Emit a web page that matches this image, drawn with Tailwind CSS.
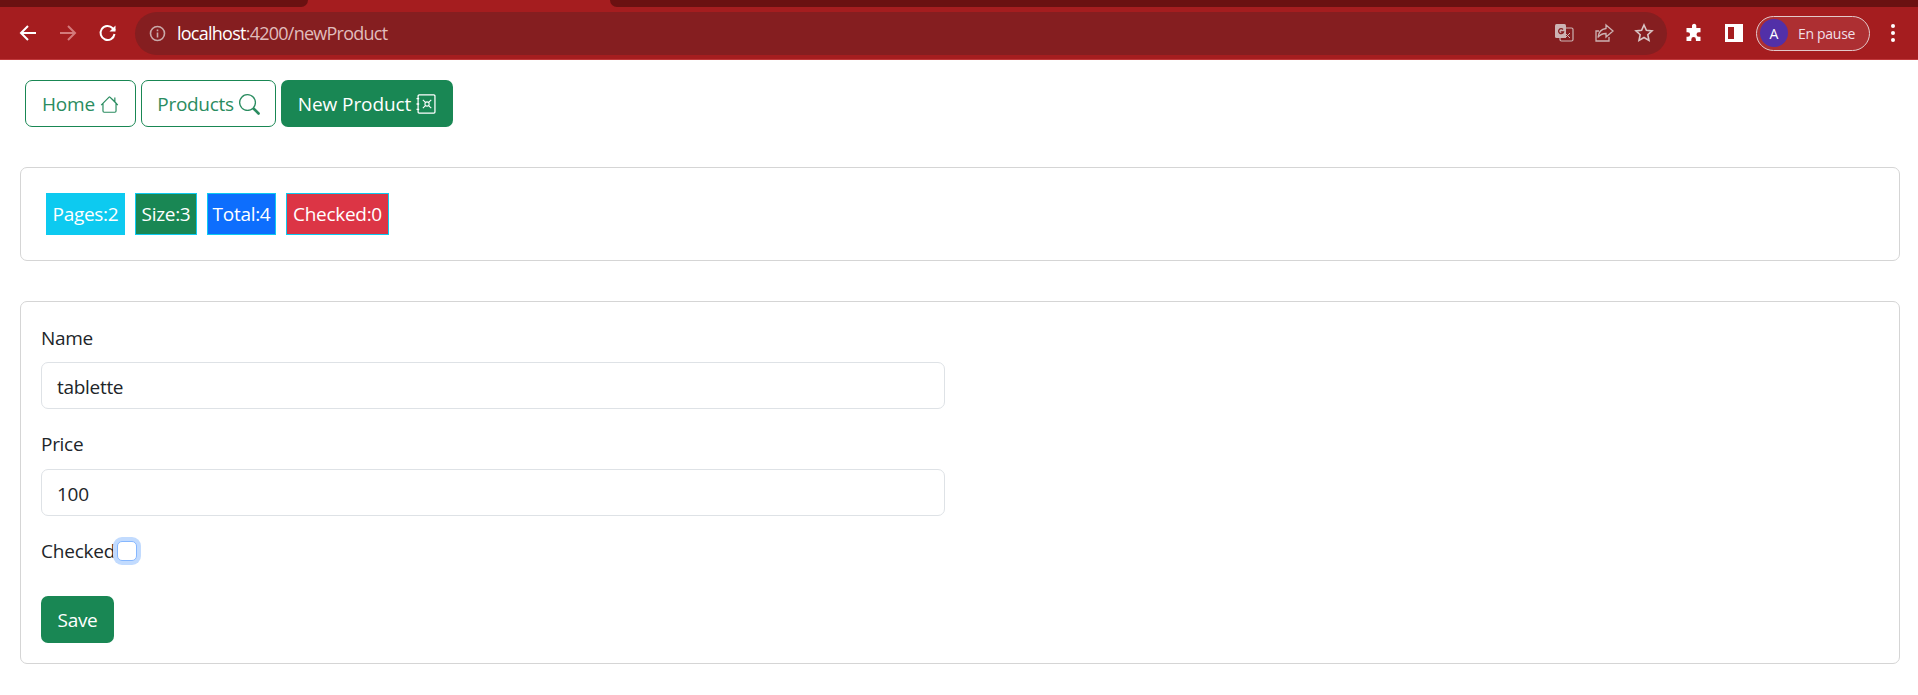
<!DOCTYPE html>
<html lang="en">
<head>
    <meta charset="UTF-8">
    <title>New Product</title>
    <script src="https://cdn.jsdelivr.net/npm/@tailwindcss/browser@4"></script>
</head>
<body class="bg-white h-[695px] overflow-hidden font-['Open_Sans',sans-serif] text-[#212529]">
    <!-- browser chrome -->
    <div class="h-[60px] bg-[#a51d1f] border-b border-[#c0393b] flex flex-col">
        <div class="h-[7px] flex">
            <div class="w-[308px] bg-[#6b1111] rounded-br-lg"></div>
            <div class="w-[302px]"></div>
            <div class="flex-1 bg-[#6b1111] rounded-bl-lg"></div>
        </div>
        <div class="flex items-center h-[52px]">
            <div class="w-[135px] flex items-center pl-[18px] gap-[20px] shrink-0">
                <svg class="w-[20px] h-[20px]" viewBox="0 0 20 20" fill="none" stroke="#fff" stroke-width="2"><path d="M18 10H3M10 3l-7 7 7 7"/></svg>
                <svg class="w-[20px] h-[20px]" viewBox="0 0 20 20" fill="none" stroke="#d47a7b" stroke-width="2"><path d="M2 10h15M10 3l7 7-7 7"/></svg>
                <svg class="w-[20px] h-[20px]" viewBox="0 0 20 20" fill="none" stroke="#fff" stroke-width="2"><path d="M16.500 11a7 7 0 1 1-1.800-5.800L17 7.500"/><path d="M17.500 2.500v6h-6z" fill="#fff" stroke="none"/></svg>
            </div>
            <div class="w-[1532px] h-[43px] rounded-full bg-[#851e20] flex items-center pl-[14px] pr-[13px] shrink-0">
                <svg class="w-[17px] h-[17px]" viewBox="0 0 17 17" fill="none" stroke="#c9a9a9" stroke-width="1.600"><circle cx="8.500" cy="8.500" r="7"/><path d="M8.500 7.500v5M8.500 4.500v1.800"/></svg>
                <span class="ml-[11px] text-[18px] tracking-[-0.75px] text-white">localhost<span class="text-[#e0bcbc]">:4200/newProduct</span></span>
                <div class="ml-auto flex items-center gap-[20px]">
                    <svg class="w-[20px] h-[20px]" viewBox="0 0 20 20"><rect x="6" y="5" width="13" height="13" rx="1.500" fill="none" stroke="#cdb3b3" stroke-width="1.200"/><rect x="1" y="1" width="11" height="14" rx="1.500" fill="#cdb3b3"/><path d="M9 6.500a2.500 2.500 0 1 0 .5 2.500H6.800" fill="none" stroke="#851e20" stroke-width="1.300"/><path d="M11 10l5 5M16 10l-5 5" stroke="#cdb3b3" stroke-width="1"/></svg>
                    <svg class="w-[20px] h-[20px]" viewBox="0 0 20 20" fill="none" stroke="#cdb3b3" stroke-width="1.300"><path d="M5 8H2v10h13v-4"/><path d="M12 2l7 6-7 6v-3.500c-4 0-6 1-8 4 .5-5 3-8.500 8-9z"/></svg>
                    <svg class="w-[20px] h-[20px]" viewBox="0 0 20 20" fill="none" stroke="#d9c4c4" stroke-width="1.600"><path d="M10 2l2.400 5.300 5.600.6-4.200 3.800 1.200 5.700L10 14.500l-5 2.900 1.200-5.700L2 7.900l5.600-.6z"/></svg>
                </div>
            </div>
            <div class="flex items-center flex-1 pl-[17px]">
                <svg class="w-[20px] h-[20px] shrink-0" viewBox="0 0 20 20" fill="#fff"><path d="M8 2.500a2.200 2.200 0 0 1 4.300 0V5h4.200v4.200h-1.700a2.300 2.300 0 0 0 0 4.600h1.700V18h-4.600v-1.600a2.300 2.300 0 0 0-4.600 0V18H2.500v-4.200h1.300a2.300 2.300 0 0 0 0-4.600H2.500V5H8z"/></svg>
                <div class="w-[18px] h-[18px] ml-[21px] border-[3px] border-white flex justify-end shrink-0"><div class="w-[6px] bg-white"></div></div>
                <div class="ml-[13px] w-[114px] h-[35px] rounded-full border border-[#e3c9ca] bg-[#ad2f32] flex items-center pl-[3px] shrink-0">
                    <div class="w-[28px] h-[28px] rounded-full bg-[#5230a8] text-white text-[14px] flex items-center justify-center">A</div>
                    <span class="ml-[10px] text-[14px] tracking-[-0.3px] text-[#f1dfe6]">En pause</span>
                </div>
                <div class="ml-[21px] flex flex-col gap-[3px]">
                    <div class="w-[4px] h-[4px] rounded-full bg-white"></div>
                    <div class="w-[4px] h-[4px] rounded-full bg-white"></div>
                    <div class="w-[4px] h-[4px] rounded-full bg-white"></div>
                </div>
            </div>
        </div>
    </div>

    <!-- page -->
    <div class="pt-[20px] px-[20px] pr-[18px]">
        <nav class="flex gap-[5px] pl-[5px]">
            <button class="h-[47px] w-[111px] pt-[1px] flex items-center justify-center gap-[5px] rounded-[7px] border border-[#198754] text-[#2a8c60] text-[19px] tracking-[-0.2px]">
                Home
                <svg class="w-[19px] h-[19px]" viewBox="0 0 16 16" fill="currentColor"><path d="M8.700 1.500a1 1 0 0 0-1.400 0L.650 8.150l.7.700L2 8.200V13.500A1.500 1.500 0 0 0 3.500 15h9a1.500 1.500 0 0 0 1.500-1.500V8.200l.65.650.7-.7L13 5.500V2h-1v2.500zM13 7.200v6.300a.5.5 0 0 1-.5.5h-9a.5.5 0 0 1-.5-.5V7.200l5-5z"/></svg>
            </button>
            <button class="h-[47px] w-[135px] pt-[1px] flex items-center justify-center gap-[5px] rounded-[7px] border border-[#198754] text-[#2a8c60] text-[19px] tracking-[-0.3px]">
                Products
                <svg class="w-[21px] h-[21px]" viewBox="0 0 16 16" fill="currentColor"><path d="M11.742 10.344a6.500 6.500 0 1 0-1.397 1.398l3.850 3.850a1 1 0 0 0 1.415-1.414zM12 6.500a5.500 5.500 0 1 1-11 0 5.500 5.500 0 0 1 11 0"/></svg>
            </button>
            <button class="h-[47px] w-[172px] pt-[1px] flex items-center justify-center gap-[5px] rounded-[7px] bg-[#198754] text-white text-[19px] tracking-[-0.1px]">
                New Product
                <svg class="w-[20px] h-[20px]" viewBox="0 0 19 19" fill="none" stroke="#fff" stroke-width="1.200"><path d="M3 .8h14a1 1 0 0 1 1 1v15.400a1 1 0 0 1-1 1H3a1 1 0 0 1-1-1V1.800a1 1 0 0 1 1-1z"/><path d="M.5 4.500h2.500M.5 9.500h2.500M.5 14.500h2.500"/><circle cx="10.500" cy="9.500" r="2" stroke-width="1"/><path d="M6.500 5.500l2.500 2.500M14.500 5.500L12 8M6.500 13.500L9 11M14.500 13.500L12 11" stroke-width="1"/></svg>
            </button>
        </nav>

        <section class="mt-[40px] h-[94px] rounded-[7px] border border-[#d5d5d5] flex items-center pl-[25px] gap-[10px] text-[19px] text-white tracking-[-0.3px]">
            <span class="h-[42px] w-[79px] pt-[1px] bg-[#0dcaf0] border border-[#0dcaf0] flex items-center justify-center">Pages:2</span>
            <span class="h-[42px] w-[62px] pt-[1px] bg-[#198754] border border-[#0dcaf0] flex items-center justify-center">Size:3</span>
            <span class="h-[42px] w-[69px] pt-[1px] bg-[#0d6efd] border border-[#0dcaf0] flex items-center justify-center">Total:4</span>
            <span class="h-[42px] w-[103px] pt-[1px] bg-[#dc3545] border border-[#0dcaf0] flex items-center justify-center">Checked:0</span>
        </section>

        <section class="mt-[40px] h-[363px] rounded-[7px] border border-[#d5d5d5] pl-[20px] pt-[22px] text-[19px] tracking-[-0.3px]">
            <label class="block leading-[29px]">Name</label>
            <input value="tablette" class="mt-[9px] block w-[904px] h-[47px] px-[15px] pt-[2px] rounded-[7px] border border-[#dee2e6]">
            <label class="block mt-[21px] leading-[29px]">Price</label>
            <input value="100" class="mt-[10px] block w-[904px] h-[47px] px-[15px] pt-[2px] rounded-[7px] border border-[#dee2e6]">
            <div class="mt-[21px] flex items-center h-[29px]">
                <label class="tracking-[-0.2px] w-[76px] shrink-0 whitespace-nowrap">Checked</label>
                <span class="w-[20px] h-[20px] rounded-[5px] bg-white border border-[#86b7fe] ring-[4px] ring-[#c2dbfe] -mt-[2px]"></span>
            </div>
            <button class="mt-[30px] block w-[73px] h-[47px] rounded-[7px] bg-[#198754] text-white pt-[1px]">Save</button>
        </section>
    </div>
</body>
</html>
